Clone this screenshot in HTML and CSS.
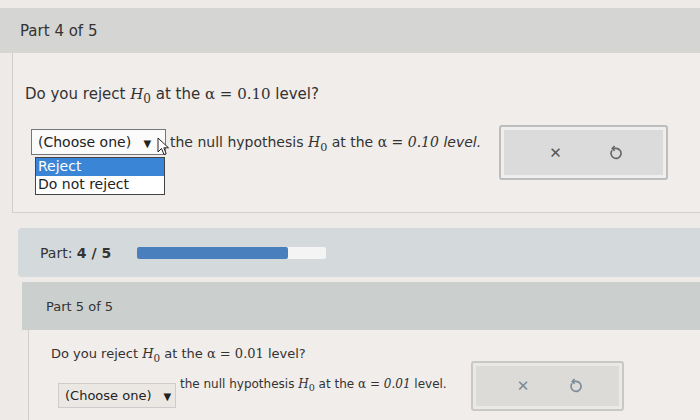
FILE: index.html
```html
<!DOCTYPE html>
<html>
<head>
    <title>Hypothesis Test - Part 4 of 5</title>
    <link rel="stylesheet" href="styles.css">
</head>
<body>
    <div class="top-gap"></div>

    <div class="part-header">Part 4 of 5</div>
    <div class="card">
        <p class="question">Do you reject <span class="math"><i>H</i><sub>0</sub></span> at the <span class="math">α = 0.10</span> level?</p>
        <div class="answer-row">
            <div class="select-wrap">
                <div class="select">(Choose one) <span class="caret">&#9660;</span></div>
                <ul class="options">
                    <li class="selected">Reject</li>
                    <li>Do not reject</li>
                </ul>
                <svg class="cursor" width="14" height="20" viewBox="0 0 14 20">
                    <path d="M1 1 L1 15 L4.5 11.5 L7 17.5 L9.2 16.6 L6.8 10.8 L11.5 10.8 Z" fill="#fff" stroke="#222" stroke-width="1"/>
                </svg>
            </div>
            <span class="after">the null hypothesis <span class="math"><i>H</i><sub>0</sub></span> at the <span class="math">α = <i>0.10</i></span> <i>level.</i></span>
            <div class="actions">
                <div class="actions-inner">
                    <span class="clear">&#10005;</span>
                    <svg class="undo" width="14" height="16" viewBox="0 0 14 16">
                        <path d="M4.2 5.2 A5 5 0 1 0 8 3.4 L5 3.4" fill="none" stroke="#666" stroke-width="1.6"/>
                        <path d="M6.6 1 L4.3 3.4 L6.6 5.8" fill="none" stroke="#666" stroke-width="1.6"/>
                    </svg>
                </div>
            </div>
        </div>
    </div>

    <div class="progress">
        <span class="progress-label">Part: <b>4 / 5</b></span>
        <div class="bar"><div class="bar-fill" style="width: 80%"></div></div>
    </div>

    <div class="part-header next">Part 5 of 5</div>
    <div class="card next">
        <p class="question">Do you reject <span class="math"><i>H</i><sub>0</sub></span> at the <span class="math">α = 0.01</span> level?</p>
        <div class="answer-row">
            <div class="select-wrap">
                <div class="select">(Choose one) <span class="caret">&#9660;</span></div>
            </div>
            <span class="after">the null hypothesis <span class="math"><i>H</i><sub>0</sub></span> at the <span class="math">α = <i>0.01</i></span> level.</span>
            <div class="actions">
                <div class="actions-inner">
                    <span class="clear">&#10005;</span>
                    <svg class="undo" width="14" height="16" viewBox="0 0 14 16">
                        <path d="M4.2 5.2 A5 5 0 1 0 8 3.4 L5 3.4" fill="none" stroke="#7a8a96" stroke-width="1.6"/>
                        <path d="M6.6 1 L4.3 3.4 L6.6 5.8" fill="none" stroke="#7a8a96" stroke-width="1.6"/>
                    </svg>
                </div>
            </div>
        </div>
    </div>
</body>
</html>
```

FILE: styles.css
```css
body {
    font-family: "DejaVu Sans", sans-serif;
    background-color: #eeeae7;
    color: #333;
    margin: 0;
    padding: 0;
    overflow: hidden;
}

.top-gap {
    height: 8px;
}

.part-header {
    height: 45px;
    line-height: 46px;
    padding-left: 20px;
    background-color: #d5d5d4;
    font-size: 15px;
    color: #333;
}

.card {
    margin-left: 12px;
    height: 159px;
    border-left: 1px solid #d2cecb;
    border-bottom: 1px solid #d3cfcc;
    background-color: #f1edea;
}

.question {
    margin: 0;
    padding: 32px 0 0 12px;
    font-size: 15px;
}

.math {
    font-family: "DejaVu Serif", serif;
    white-space: nowrap;
}

.math sub {
    font-size: 0.8em;
    line-height: 0;
}

.answer-row {
    display: flex;
    align-items: flex-start;
    margin-top: 22px;
    padding-left: 18px;
}

.select-wrap {
    position: relative;
    margin-top: 4px;
}

.select {
    width: 127px;
    height: 24px;
    line-height: 24px;
    padding-left: 6px;
    border: 1px solid #777;
    background-color: #fbfbfb;
    font-size: 14px;
    color: #222;
}

.caret {
    font-size: 10px;
    margin-left: 8px;
}

.options {
    position: absolute;
    top: 28px;
    left: 4px;
    width: 128px;
    margin: 0;
    padding: 0;
    list-style: none;
    border: 1px solid #444;
    background-color: #fff;
    font-size: 14px;
    color: #222;
}

.options li {
    height: 18px;
    line-height: 17px;
    padding-left: 2px;
}

.options li.selected {
    background-color: #3a85d6;
    color: #fff;
}

.cursor {
    position: absolute;
    top: 8px;
    left: 126px;
}

.after {
    margin-left: 4px;
    margin-top: 9px;
    font-size: 14px;
    color: #333;
}

.actions {
    margin-left: 18px;
    width: 169px;
    height: 55px;
    border: 2px solid #bdbdbd;
    border-radius: 3px;
    background-color: #eeeeee;
    padding: 3px;
    box-sizing: border-box;
}

.actions-inner {
    display: flex;
    align-items: center;
    justify-content: space-around;
    height: 100%;
    background-color: #dbdbdb;
    padding: 0 18px 0 22px;
}

.clear {
    font-size: 15px;
    color: #555;
}

.progress {
    display: flex;
    align-items: center;
    margin: 15px 0 0 18px;
    height: 49px;
    background-color: #d4d9dc;
    border-radius: 4px 0 0 4px;
}

.progress-label {
    padding-left: 22px;
    width: 97px;
    font-size: 14px;
    color: #333;
}

.progress-label b {
    font-weight: 600;
}

.bar {
    width: 189px;
    height: 12px;
    background-color: #f4f4f4;
    border-radius: 2px;
}

.bar-fill {
    height: 100%;
    background-color: #4a7fbe;
    border-radius: 2px;
}

.part-header.next {
    margin: 5px 0 0 22px;
    height: 48px;
    line-height: 50px;
    padding-left: 24px;
    font-size: 13px;
    background-color: #cbd0cf;
}

.card.next {
    margin-left: 28px;
    height: 90px;
    border-bottom: none;
}

.card.next .question {
    padding: 16px 0 0 22px;
    font-size: 13px;
}

.card.next .answer-row {
    margin-top: 0;
    padding-left: 29px;
}

.card.next .select-wrap {
    margin-top: 22px;
}

.card.next .select {
    width: 110px;
    height: 23px;
    border-color: #ccc;
    background-color: #ebe8e4;
    font-size: 13px;
}

.card.next .after {
    margin-top: 16px;
    font-size: 12px;
}

.card.next .actions {
    margin-left: 24px;
    margin-top: 0;
    width: 153px;
    height: 50px;
    border-color: #c8c8c6;
    background-color: #ebe9e6;
}

.card.next .actions-inner {
    background-color: #dcdbd8;
}

.card.next .clear {
    color: #7a8a96;
}
```
